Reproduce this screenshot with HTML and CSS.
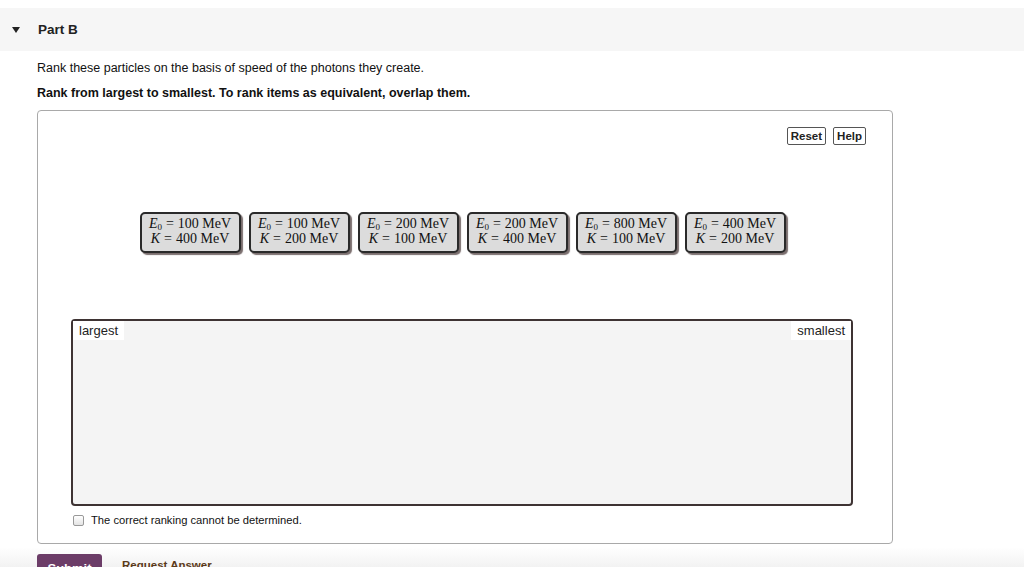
FILE: index.html
```html
<!DOCTYPE html>
<html>
<head>
<meta charset="utf-8">
<link rel="stylesheet" href="styles.css">
</head>
<body>
<div class="part-header">
  <span class="caret"></span>
  <span class="part-title">Part B</span>
</div>
<div class="content">
  <p class="prompt">Rank these particles on the basis of speed of the photons they create.</p>
  <p class="instr">Rank from largest to smallest. To rank items as equivalent, overlap them.</p>
  <div class="box">
    <div class="toolbar">
      <button class="tbtn">Reset</button>
      <button class="tbtn">Help</button>
    </div>
    <div class="tiles">
      <div class="tile"><div><i>E</i><sub>0</sub><span class="eq">=</span>100 MeV</div><div><i>K</i><span class="eq">=</span>400 MeV</div></div>
      <div class="tile"><div><i>E</i><sub>0</sub><span class="eq">=</span>100 MeV</div><div><i>K</i><span class="eq">=</span>200 MeV</div></div>
      <div class="tile"><div><i>E</i><sub>0</sub><span class="eq">=</span>200 MeV</div><div><i>K</i><span class="eq">=</span>100 MeV</div></div>
      <div class="tile"><div><i>E</i><sub>0</sub><span class="eq">=</span>200 MeV</div><div><i>K</i><span class="eq">=</span>400 MeV</div></div>
      <div class="tile"><div><i>E</i><sub>0</sub><span class="eq">=</span>800 MeV</div><div><i>K</i><span class="eq">=</span>100 MeV</div></div>
      <div class="tile"><div><i>E</i><sub>0</sub><span class="eq">=</span>400 MeV</div><div><i>K</i><span class="eq">=</span>200 MeV</div></div>
    </div>
    <div class="rank-area">
      <span class="rlabel">largest</span>
      <span class="rlabel">smallest</span>
    </div>
    <label class="cant">
      <span class="cbox"></span>
      <span>The correct ranking cannot be determined.</span>
    </label>
  </div>
</div>
<div class="footer">
  <button class="submit">Submit</button>
  <span class="req">Request Answer</span>
</div>
</body>
</html>
```
FILE: styles.css
```css
html, body {
  margin: 0;
  padding: 0;
  background: #fff;
  font-family: "Liberation Sans", Arial, sans-serif;
  color: #111;
  overflow: hidden;
}
.part-header {
  margin-top: 8px;
  height: 43px;
  background: #f6f6f6;
  display: flex;
  align-items: center;
  padding-left: 12px;
}
.caret {
  width: 0;
  height: 0;
  border-left: 4px solid transparent;
  border-right: 4px solid transparent;
  border-top: 6px solid #222;
  margin-right: 18px;
  margin-top: 1px;
}
.part-title {
  font-weight: bold;
  font-size: 13.5px;
  color: #222;
}
.content {
  padding: 0 131px 0 37px;
}
.prompt {
  margin: 10px 0 0;
  font-size: 12.5px;
  line-height: 14px;
}
.instr {
  margin: 11px 0 0;
  font-size: 12.5px;
  line-height: 14px;
  font-weight: bold;
}
.box {
  margin-top: 10px;
  height: 434px;
  box-sizing: border-box;
  border: 1px solid #a9a9a9;
  border-radius: 4px;
  display: flex;
  flex-direction: column;
}
.toolbar {
  display: flex;
  justify-content: flex-end;
  gap: 7px;
  margin: 16px 26px 0 0;
}
.tbtn {
  font-family: "Liberation Sans", Arial, sans-serif;
  font-weight: bold;
  font-size: 11.5px;
  height: 18px;
  padding: 0 3px;
  border: 1px solid #555;
  border-radius: 2px;
  background: #fff;
  color: #222;
  line-height: 16px;
}
.tiles {
  display: flex;
  justify-content: center;
  gap: 8px;
  margin: 67px 0 0 0;
  padding-right: 5px;
}
.tile {
  width: 101px;
  height: 41px;
  box-sizing: border-box;
  background: #dcdcdc;
  border: 2px solid #2a2a2a;
  border-radius: 5px;
  box-shadow: 2px 2px 1px #7a6e6e;
  font-family: "Liberation Serif", "Times New Roman", serif;
  font-size: 14px;
  line-height: 15px;
  text-align: center;
  padding-top: 2px;
  color: #111;
  white-space: nowrap;
}
.tile sub {
  font-size: 9px;
  line-height: 0;
  vertical-align: -2px;
}
.eq {
  margin: 0 4px;
}
.rank-area {
  margin: 66px 39px 0 33px;
  height: 187px;
  box-sizing: border-box;
  border: 2px solid #3e3333;
  border-radius: 4px;
  background: #f4f4f4;
  display: flex;
  justify-content: space-between;
  align-items: flex-start;
}
.rlabel {
  background: #fff;
  font-size: 13px;
  line-height: 19px;
  padding: 0 6px 0 6px;
  color: #222;
}
.cant {
  display: flex;
  align-items: center;
  margin: 8px 0 0 35px;
  font-size: 11.2px;
  color: #111;
}
.cbox {
  width: 9px;
  height: 9px;
  border: 1px solid #999;
  border-radius: 2px;
  background: linear-gradient(#fff, #e4e4e4);
  margin-right: 7px;
}
.footer {
  margin-top: 3px;
  height: 30px;
  background: linear-gradient(#fff, #ececec);
  display: flex;
  align-items: flex-start;
  padding: 7px 0 0 37px;
  box-sizing: border-box;
}
.submit {
  width: 65px;
  height: 26px;
  background: #6c3d68;
  color: #fff;
  border: none;
  border-radius: 3px;
  font-family: "Liberation Sans", Arial, sans-serif;
  font-weight: bold;
  font-size: 13px;
  padding-top: 3px;
}
.req {
  margin-left: 20px;
  margin-top: 5px;
  color: #5b3a19;
  font-weight: bold;
  font-size: 11.5px;
}
```
